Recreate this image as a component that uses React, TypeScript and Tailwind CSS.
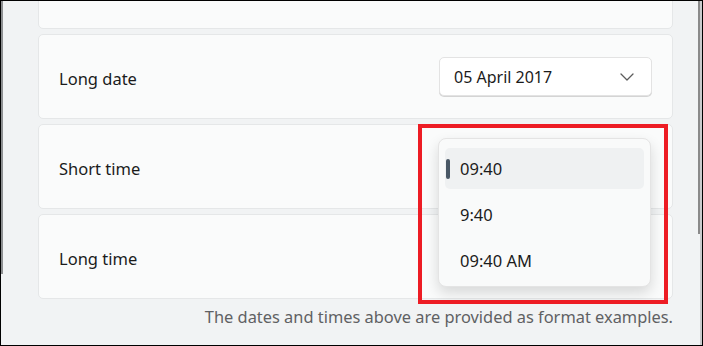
import React from "react";

const font = { fontFamily: '"Noto Sans", "Open Sans", sans-serif' };

interface RowProps {
  label?: string;
  className?: string;
  children?: React.ReactNode;
}

const SettingRow: React.FC<RowProps> = ({ label, className = "", children }) => (
  <div
    className={`flex h-[85px] shrink-0 items-center justify-between rounded-[5px] border border-[#e5e7e8] bg-[#fafbfb] pl-[20px] pr-[20px] ${className}`}
  >
    <span className="pt-[5px] text-[16.5px] text-[#1b1b1b]">{label}</span>
    {children}
  </div>
);

const ComboBox: React.FC<{ value: string }> = ({ value }) => (
  <div className="flex h-[39px] w-[213px] items-center justify-between rounded-[5px] border border-[#e3e3e3] bg-white pl-[14px] pr-[17px] shadow-[0_1px_0_#d4d4d4]">
    <span className="text-[16px] text-[#1b1b1b]">{value}</span>
    <svg width="14" height="8" viewBox="0 0 14 8" fill="none">
      <path d="M1 1 L7 7 L13 1" stroke="#5c5c5c" strokeWidth="1.3" strokeLinecap="round" strokeLinejoin="round" />
    </svg>
  </div>
);

const options = ["09:40", "9:40", "09:40 AM"];

export default function App() {
  return (
    <div
      className="relative h-[346px] w-[703px] overflow-hidden border border-black bg-[#f1f3f4]"
      style={font}
    >
      {/* left / right scroll edges */}
      <div className="absolute left-0 top-0 h-[273px] w-[2px] bg-[#8d8f91]" />
      <div className="absolute right-0 top-0 h-full w-[2px] bg-[#c9cbcd]" />
      <div className="absolute right-[2px] top-0 h-[233px] w-[2px] bg-[#8a8a8a]" />

      <div className="flex flex-col gap-[5px] pl-[37px] pr-[29px] mt-[-57px]">
        <SettingRow className="relative">
          <div className="absolute right-[20px] top-[-10px] h-[39px] w-[213px] rounded-[5px] border border-[#e3e3e3] bg-white" />
        </SettingRow>
        <SettingRow label="Long date">
          <ComboBox value="05 April 2017" />
        </SettingRow>
        <SettingRow label="Short time" />
        <SettingRow label="Long time" />
        <div className="mt-[1px] flex justify-end text-[16.4px] text-[#5f6163]">
          The dates and times above are provided as format examples.
        </div>
      </div>

      {/* open dropdown */}
      <div className="absolute left-[437px] top-[137px] flex h-[149px] w-[213px] flex-col rounded-[8px] border border-[#e4e4e4] bg-[#f9fafa] px-[6px] pt-[9px] shadow-[0_6px_14px_rgba(0,0,0,0.14)]">
        {options.map((opt, i) => (
          <div
            key={opt}
            className={`relative flex h-[41px] shrink-0 items-center rounded-[5px] pl-[15px] pt-[1px] text-[16.5px] text-[#1b1b1b] ${
              i === 0 ? "bg-[#eff1f2]" : ""
            } ${i > 0 ? "mt-[5px]" : ""}`}
          >
            {i === 0 && (
              <span className="absolute left-[1px] top-[11px] h-[20px] w-[4px] rounded-full bg-[#4a5866]" />
            )}
            {opt}
          </div>
        ))}
      </div>

      {/* annotation */}
      <div className="pointer-events-none absolute left-[417px] top-[123px] h-[180px] w-[250px] border-[4px] border-[#ed1c24]" />
    </div>
  );
}
